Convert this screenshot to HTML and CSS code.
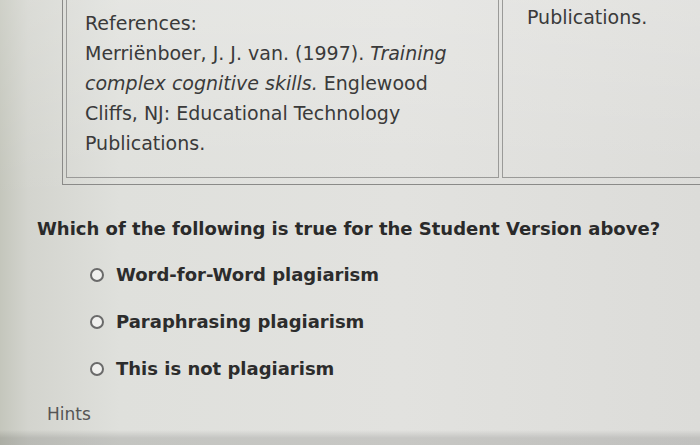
FILE: index.html
```html
<!DOCTYPE html>
<html>
<head>
<meta charset="utf-8">
<link rel="stylesheet" href="styles.css">
</head>
<body>
<div class="page">
  <table class="cmp">
    <tr>
      <td class="cell left">
        <p class="line">References:</p>
        <p class="line">Merriënboer, J. J. van. (1997). <i>Training</i></p>
        <p class="line"><i>complex cognitive skills.</i> Englewood</p>
        <p class="line">Cliffs, NJ: Educational Technology</p>
        <p class="line">Publications.</p>
      </td>
      <td class="cell right">
        <p class="line">Publications.</p>
      </td>
    </tr>
  </table>

  <div class="question">Which of the following is true for the Student Version above?</div>

  <ul class="options">
    <li class="opt"><span class="radio"></span>Word-for-Word plagiarism</li>
    <li class="opt"><span class="radio"></span>Paraphrasing plagiarism</li>
    <li class="opt"><span class="radio"></span>This is not plagiarism</li>
  </ul>

  <div class="hints">Hints</div>
</div>
</body>
</html>
```

FILE: styles.css
```css
html, body {
  margin: 0;
  padding: 0;
  width: 700px;
  height: 445px;
  overflow: hidden;
}
body {
  font-family: "DejaVu Sans", Verdana, sans-serif;
  color: #333;
  background:
    linear-gradient(to bottom, rgba(255,255,255,0.18) 0, rgba(255,255,255,0) 200px, rgba(0,0,0,0) 430px, rgba(0,0,0,0.12) 438px, rgba(0,0,0,0.12) 445px),
    linear-gradient(to right, #c4c6bc 0, #d3d4ce 28px, #dfe0dc 120px, #e2e2df 400px, #dcdcd9 700px);
}
.page {
  position: relative;
  height: 445px;
}
.cmp {
  margin: -16px 0 0 62px;
  width: 660px;
  border: 1px solid #8a8a88;
  border-spacing: 3px 6px;
  border-collapse: separate;
  table-layout: fixed;
}
.cell {
  border: 1px solid #9a9a98;
  vertical-align: top;
  padding: 0;
}
.left {
  width: 433px;
  height: 187px;
  padding: 16px 0 0 18px;
  box-sizing: border-box;
}
.right {
  padding: 10px 0 0 24px;
}
.line {
  margin: 0;
  font-size: 19px;
  line-height: 30px;
  color: #3a3a3a;
  white-space: nowrap;
}
.question {
  margin: 32px 0 0 37px;
  font-size: 18px;
  font-weight: bold;
  color: #2a2a2a;
  line-height: 24px;
  white-space: nowrap;
}
.options {
  list-style: none;
  margin: 22px 0 0 90px;
  padding: 0;
  display: flex;
  flex-direction: column;
  gap: 23px;
}
.opt {
  display: flex;
  align-items: center;
  gap: 12px;
  font-size: 18px;
  font-weight: bold;
  color: #2c2c2c;
  line-height: 24px;
}
.radio {
  width: 10px;
  height: 10px;
  border: 2px solid #6a6a6a;
  border-radius: 50%;
  background: #f0f0ee;
  flex: none;
}
.hints {
  margin: 21px 0 0 47px;
  font-size: 17px;
  color: #555;
  line-height: 24px;
}
```
